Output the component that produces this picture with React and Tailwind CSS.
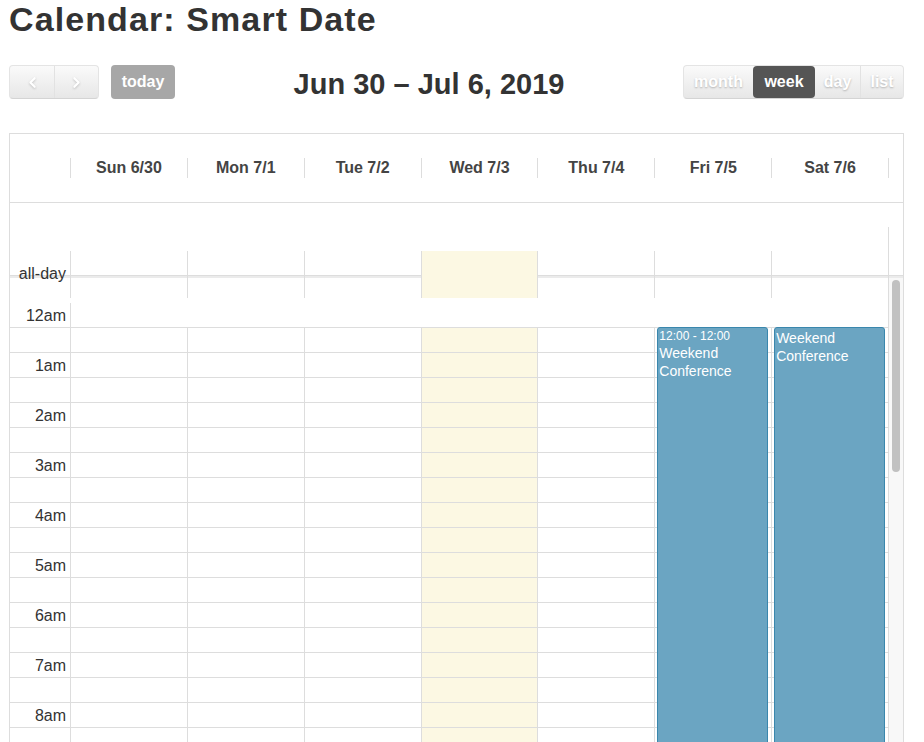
import { ChevronLeft, ChevronRight } from 'lucide-react'

const DAYS = ['Sun 6/30', 'Mon 7/1', 'Tue 7/2', 'Wed 7/3', 'Thu 7/4', 'Fri 7/5', 'Sat 7/6']
const TODAY = 3
const SLOTS = Array.from({ length: 17 }, (_, i) => i)
const COLS = 'grid grid-cols-[60px_repeat(7,minmax(0,1fr))_15px]'

const EVENTS = {
  5: { time: '12:00 - 12:00', title: 'Weekend Conference' },
  6: { title: 'Weekend Conference' },
}

const shadow = '[text-shadow:0_1px_2px_rgba(0,0,0,0.25)]'

function Toolbar() {
  return (
    <div className="mt-[27px] flex h-[34px] items-center">
      <div className="flex h-full">
        <div className="flex h-full overflow-hidden rounded-[4px] border border-[#e4e4e4] border-b-[#d4d4d4] bg-linear-to-b from-[#fafafa] to-[#e7e7e7]">
          <button className="flex w-[44px] items-center justify-center text-white">
            <ChevronLeft size={17} strokeWidth={3} className="drop-shadow-[0_1px_1px_rgba(0,0,0,0.2)]" />
          </button>
          <button className="flex w-[44px] items-center justify-center border-l border-[#e2e2e2] text-white">
            <ChevronRight size={17} strokeWidth={3} className="drop-shadow-[0_1px_1px_rgba(0,0,0,0.2)]" />
          </button>
        </div>
        <button className="ml-[12px] h-full w-[64px] rounded-[4px] bg-[#a7a7a7] text-[16px] font-bold text-white">
          today
        </button>
      </div>

      <h2 className="mt-[5px] flex-1 text-center text-[29px] font-bold leading-none text-[#333]">
        Jun 30 – Jul 6, 2019
      </h2>

      <div className="flex h-full overflow-hidden rounded-[4px] border border-[#e4e4e4] border-b-[#d4d4d4] bg-linear-to-b from-[#fafafa] to-[#e7e7e7] text-[16px] font-bold">
        <button className={`w-[69px] text-white ${shadow}`}>month</button>
        <button className="w-[62px] rounded-[4px] bg-[#555] text-white">week</button>
        <button className={`w-[45px] text-white ${shadow}`}>day</button>
        <button className={`w-[43px] border-l border-[#e2e2e2] text-white ${shadow}`}>list</button>
      </div>
    </div>
  )
}

function Event({ time, title }) {
  return (
    <div className="absolute top-[49px] right-[3px] left-[3px] h-[600px] rounded-[3px] border border-[#3a87ad] bg-[#6ba5c2] px-[1px] pt-[1px] text-white">
      {time && <div className="text-[12px] leading-[14px]">{time}</div>}
      <div className={`text-[14px] leading-[18px] ${time ? 'mt-[1px]' : ''}`}>{title}</div>
    </div>
  )
}

export default function App() {
  return (
    <div className="h-[742px] overflow-hidden bg-white font-['Liberation_Sans',Arial,sans-serif] text-[#333]">
      <div className="ml-[9px] w-[895px]">
        <h1 className="text-[34px] font-bold leading-[38px] tracking-[1.1px] text-[#333]">Calendar: Smart Date</h1>

        <Toolbar />

        <div className="mt-[34px] border border-[#ddd]">
          {/* Day headers */}
          <div className={`${COLS} h-[69px] items-center border-b border-[#ddd]`}>
            <div />
            {DAYS.map((day) => (
              <div
                key={day}
                className="flex h-[20px] items-center justify-center border-l border-[#ddd] text-[16px] font-bold text-[#444]"
              >
                {day}
              </div>
            ))}
            <div className="h-[20px] border-l border-[#ddd]" />
          </div>

          {/* Empty band */}
          <div className={`${COLS} h-[48px]`}>
            <div className="col-start-9 mt-[24px] h-[24px] border-l border-[#ddd]" />
          </div>

          {/* All-day row */}
          <div className={`${COLS} h-[24px]`}>
            <div className="flex items-end justify-end pr-[4px]">
              <span className="relative z-10 -mb-[7px] text-[16px] leading-[16px]">all-day</span>
            </div>
            {DAYS.map((day, i) => (
              <div key={day} className={`border-l border-[#ddd] ${i === TODAY ? 'bg-[#fcf8e3]' : ''}`} />
            ))}
            <div className="border-l border-[#ddd]" />
          </div>

          {/* Divider */}
          <div className={`${COLS} h-[3px]`}>
            <div className="border-t border-[#ddd] bg-[#ebebeb]" />
            {DAYS.map((day, i) =>
              i === TODAY ? (
                <div key={day} className="border-l border-[#ddd] bg-[#fcf8e3]" />
              ) : (
                <div key={day} className="border-t border-l border-[#ddd] bg-[#ebebeb]" />
              )
            )}
            <div className="border-t border-l border-[#ddd] bg-[#ebebeb]" />
          </div>

          {/* Time grid */}
          <div className={COLS}>
            <div className="flex flex-col text-[16px]">
              <div className="h-[20px]" />
              <div className="h-[5px]" />
              <div className="flex h-[24px] items-center justify-end pt-[2px] pr-[4px]">12am</div>
              {SLOTS.map((i) => (
                <div
                  key={i}
                  className="flex h-[25px] items-center justify-end border-t border-[#ddd] pt-[2px] pr-[4px]"
                >
                  {i % 2 === 1 ? `${(i + 1) / 2}am` : ''}
                </div>
              ))}
            </div>

            {DAYS.map((day, d) => {
              const today = d === TODAY ? 'bg-[#fcf8e3]' : ''
              return (
                <div key={day} className="relative flex flex-col">
                  <div className={`h-[20px] border-l border-[#ddd] ${today}`} />
                  <div className="h-[5px]" />
                  <div className={`h-[24px] ${d === 0 ? 'border-l border-[#ddd]' : ''}`} />
                  {SLOTS.map((i) => (
                    <div key={i} className={`h-[25px] border-t border-l border-[#ddd] ${today}`} />
                  ))}
                  {EVENTS[d] && <Event {...EVENTS[d]} />}
                </div>
              )
            })}

            {/* Scrollbar */}
            <div className="border-l border-[#ddd] bg-[#f8f8f8] pt-[2px] pl-[3px]">
              <div className="h-[192px] w-[8px] rounded-full bg-[#c1c1c1]" />
            </div>
          </div>
        </div>
      </div>
    </div>
  )
}
